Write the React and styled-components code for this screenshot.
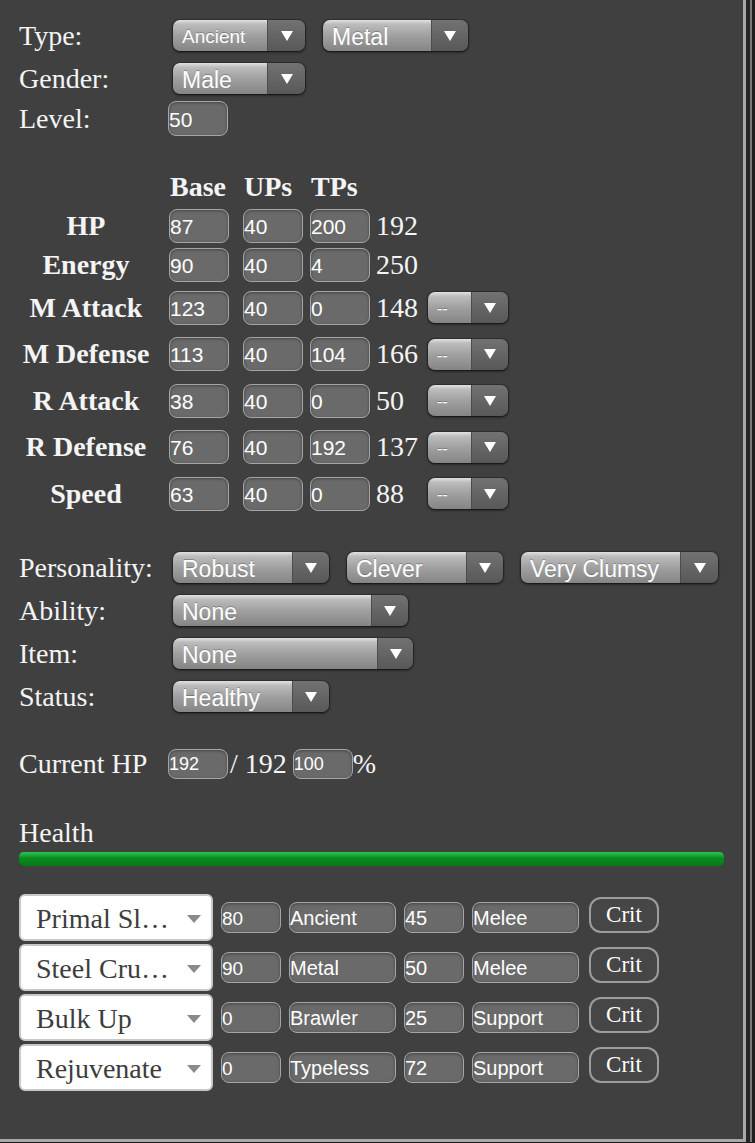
import React from 'react'
import styled, { createGlobalStyle } from 'styled-components'

const GlobalStyle = createGlobalStyle`
  html, body { margin: 0; padding: 0; background: #1e1e1e; }
  body {
    font-family: "Liberation Serif", "Times New Roman", serif;
    color: #f4f4f4;
  }
`

const stats = [
  { name: 'HP', base: 87, ups: 40, tps: 200, total: 192, nature: false },
  { name: 'Energy', base: 90, ups: 40, tps: 4, total: 250, nature: false },
  { name: 'M Attack', base: 123, ups: 40, tps: 0, total: 148, nature: true },
  { name: 'M Defense', base: 113, ups: 40, tps: 104, total: 166, nature: true },
  { name: 'R Attack', base: 38, ups: 40, tps: 0, total: 50, nature: true },
  { name: 'R Defense', base: 76, ups: 40, tps: 192, total: 137, nature: true },
  { name: 'Speed', base: 63, ups: 40, tps: 0, total: 88, nature: true },
]

const moves = [
  { name: 'Primal Sl…', power: 80, type: 'Ancient', acc: 45, cat: 'Melee' },
  { name: 'Steel Cru…', power: 90, type: 'Metal', acc: 50, cat: 'Melee' },
  { name: 'Bulk Up', power: 0, type: 'Brawler', acc: 25, cat: 'Support' },
  { name: 'Rejuvenate', power: 0, type: 'Typeless', acc: 72, cat: 'Support' },
]

const Dropdown = ({ value, width, size, arrow = 36, offset }) => (
  <DropBox $width={width} $offset={offset}>
    <DropFace $size={size}>{value}</DropFace>
    <DropArrow $w={arrow} />
  </DropBox>
)

const App = () => {
  return (
    <>
      <GlobalStyle />
      <Panel>
        <FormGrid $label={149} $rows="43px 43px 37px">
          <Label>Type:</Label>
          <Inline>
            <Dropdown value="Ancient" width={132} size={19} arrow={37} offset={5} />
            <Dropdown value="Metal" width={145} />
          </Inline>
          <Label>Gender:</Label>
          <Dropdown value="Male" width={132} arrow={37} offset={5} />
          <Label>Level:</Label>
          <Field defaultValue="50" $h={35} />
        </FormGrid>

        <StatGrid>
          <span />
          <HeadCell>Base</HeadCell>
          <HeadCell>UPs</HeadCell>
          <HeadCell>TPs</HeadCell>
          <span />
          <span />
          {stats.map((s) => (
            <React.Fragment key={s.name}>
              <StatName>{s.name}</StatName>
              <Field defaultValue={s.base} />
              <Field defaultValue={s.ups} />
              <Field defaultValue={s.tps} />
              <Total>{s.total}</Total>
              {s.nature ? <Dropdown value="--" width={80} size={16} /> : <span />}
            </React.Fragment>
          ))}
        </StatGrid>

        <FormGrid $label={154} $rows="43px 43px 43px 43px" $top={29}>
          <Label>Personality:</Label>
          <Inline>
            <Dropdown value="Robust" width={156} />
            <Dropdown value="Clever" width={156} />
            <Dropdown value="Very Clumsy" width={197} arrow={37} />
          </Inline>
          <Label>Ability:</Label>
          <Dropdown value="None" width={235} />
          <Label>Item:</Label>
          <Dropdown value="None" width={240} arrow={35} />
          <Label>Status:</Label>
          <Dropdown value="Healthy" width={156} />
        </FormGrid>

        <HpRow>
          <HpLabel>Current HP</HpLabel>
          <Field defaultValue="192" $h={30} $size={18} />
          <HpText $gap={2}>/ 192</HpText>
          <Field defaultValue="100" $h={30} $size={18} $left={6} />
          <HpText>%</HpText>
        </HpRow>

        <HealthLabel>Health</HealthLabel>
        <HealthBar>
          <HealthFill style={{ width: '100%' }} />
        </HealthBar>

        <MoveList>
          {moves.map((m) => (
            <MoveRow key={m.name}>
              <MoveSelect>
                <span>{m.name}</span>
                <MoveArrow />
              </MoveSelect>
              <Field defaultValue={m.power} $h={31} $size={19} $left={8} />
              <Field defaultValue={m.type} $w={107} $h={31} $size={20} $left={8} />
              <Field defaultValue={m.acc} $h={31} $size={20} $left={8} />
              <Field defaultValue={m.cat} $w={107} $h={31} $size={20} $left={8} />
              <CritButton>Crit</CritButton>
            </MoveRow>
          ))}
        </MoveList>
      </Panel>
    </>
  )
}

export default App

const Panel = styled.div`
  box-sizing: border-box;
  width: 746px;
  height: 1142px;
  background: #404040;
  border-right: 3px solid #a9a9a9;
  border-bottom: 3px solid #a9a9a9;
  padding: 14px 0 0 19px;
  box-shadow: 4px 0 0 #262626, 6px 0 0 #7a7a7a;
`;

const FormGrid = styled.div`
  display: grid;
  grid-template-columns: ${({ $label }) => $label}px auto;
  grid-template-rows: ${({ $rows }) => $rows};
  align-items: center;
  justify-items: start;
  margin-top: ${({ $top }) => $top || 0}px;
`;

const Label = styled.div`
  font-size: 28px;
  line-height: 32px;
  white-space: nowrap;
`;

const Inline = styled.div`
  display: flex;
  align-items: center;
  gap: 18px;
`;

const DropBox = styled.div`
  display: flex;
  box-sizing: border-box;
  width: ${({ $width }) => $width}px;
  height: 31px;
  margin-left: ${({ $offset }) => $offset || 0}px;
  border-radius: 7px;
  overflow: hidden;
  box-shadow: 0 1px 3px rgba(0, 0, 0, 0.75), 0 0 0 1px #333;
`;

const DropFace = styled.div`
  flex: 1;
  display: flex;
  align-items: center;
  box-sizing: border-box;
  padding: 3px 0 0 9px;
  background: linear-gradient(#e2e2e2 0%, #bcbcbc 14%, #a0a0a0 50%, #858585 100%);
  border-right: 1px solid #4c4c4c;
  font-family: "Liberation Sans", Arial, sans-serif;
  font-size: ${({ $size }) => $size || 23}px;
  color: #fff;
  text-shadow: 0 -1px 0 rgba(0, 0, 0, 0.25);
  white-space: nowrap;
  overflow: hidden;
`;

const DropArrow = styled.div`
  flex: none;
  width: ${({ $w }) => $w}px;
  display: flex;
  align-items: center;
  justify-content: center;
  background: linear-gradient(#727272, #585858);

  &::after {
    content: '';
    border-left: 6px solid transparent;
    border-right: 6px solid transparent;
    border-top: 10px solid #fff;
  }
`;

const Field = styled.input`
  box-sizing: border-box;
  width: ${({ $w }) => $w || 60}px;
  height: ${({ $h }) => $h || 34}px;
  margin: 0 0 0 ${({ $left }) => $left || 0}px;
  padding: 2px 0 0 0;
  background: #6a6a6a;
  border: 1.5px solid #a5a5a5;
  border-radius: 8px;
  box-shadow: inset 0 1px 3px rgba(0, 0, 0, 0.35);
  color: #fff;
  font-family: "Liberation Sans", Arial, sans-serif;
  font-size: ${({ $size }) => $size || 21}px;
  outline: none;
`;

const StatGrid = styled.div`
  display: grid;
  grid-template-columns: 150px 74px 67px 66px 52px 80px;
  grid-template-rows: 39.5px 39px 39px repeat(5, 46.5px);
  align-items: center;
  justify-items: start;
  margin-top: 30px;
`;

const HeadCell = styled.div`
  font-size: 28px;
  font-weight: 700;
  line-height: 32px;
  padding-left: 1px;
`;

const StatName = styled.div`
  justify-self: stretch;
  box-sizing: border-box;
  padding-right: 16px;
  text-align: center;
  font-size: 28px;
  font-weight: 700;
  line-height: 32px;
  white-space: nowrap;
`;

const Total = styled.div`
  font-size: 28px;
  line-height: 32px;
`;

const HpRow = styled.div`
  display: flex;
  align-items: center;
  height: 36px;
  margin-top: 27.5px;
`;

const HpLabel = styled.div`
  width: 149px;
  font-size: 28px;
  line-height: 32px;
`;

const HpText = styled.span`
  font-size: 28px;
  line-height: 32px;
  margin-left: ${({ $gap }) => $gap || 0}px;
`;

const HealthLabel = styled.div`
  font-size: 28px;
  line-height: 32px;
  margin-top: 35.5px;
`;

const HealthBar = styled.div`
  width: 705px;
  height: 14px;
  margin-top: 2.5px;
  border-radius: 4px;
  background: #1d1d1d;
  overflow: hidden;
`;

const HealthFill = styled.div`
  height: 100%;
  border-radius: 4px;
  background: linear-gradient(#2cc452 0%, #17a53a 25%, #0a8a1e 45%, #067a16 100%);
`;

const MoveList = styled.div`
  display: flex;
  flex-direction: column;
  gap: 3px;
  margin-top: 28.5px;
`;

const MoveRow = styled.div`
  display: flex;
  align-items: center;
  height: 47px;
`;

const MoveSelect = styled.div`
  box-sizing: border-box;
  width: 194px;
  height: 47px;
  display: flex;
  align-items: center;
  justify-content: space-between;
  padding: 2px 10px 0 15px;
  background: #fff;
  border: 2px solid #c8c8c8;
  border-radius: 6px;
  color: #3d3d3d;
  font-size: 28px;
  white-space: nowrap;
`;

const MoveArrow = styled.span`
  border-left: 7px solid transparent;
  border-right: 7px solid transparent;
  border-top: 8px solid #8a8a8a;
`;

const CritButton = styled.button`
  box-sizing: border-box;
  width: 70px;
  height: 36px;
  margin: -5px 0 0 10px;
  padding: 0;
  background: #464646;
  border: 2px solid #9d9d9d;
  border-radius: 12px;
  color: #fff;
  font-family: "Liberation Serif", "Times New Roman", serif;
  font-size: 23px;
`;
